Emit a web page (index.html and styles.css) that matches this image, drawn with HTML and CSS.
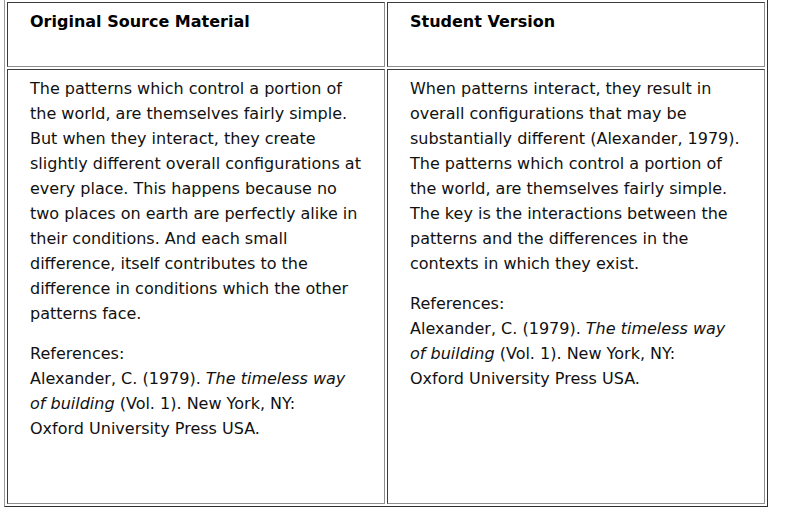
FILE: index.html
```html
<!DOCTYPE html>
<html>
<head>
<meta charset="utf-8">
<link rel="stylesheet" href="styles.css">
</head>
<body>
<table class="compare">
  <tr class="head-row">
    <td class="cell"><strong>Original Source Material</strong></td>
    <td class="cell"><strong>Student Version</strong></td>
  </tr>
  <tr class="body-row">
    <td class="cell">
      <p class="para">The patterns which control a portion of the world, are themselves fairly simple. But when they interact, they create slightly different overall configurations at every place. This happens because no two places on earth are perfectly alike in their conditions. And each small difference, itself contributes to the difference in conditions which the other patterns face.</p>
      <p class="para">References:<br>Alexander, C. (1979). <em>The timeless way of building</em> (Vol. 1). New York, NY: Oxford&nbsp;University Press USA.</p>
    </td>
    <td class="cell">
      <p class="para">When patterns interact, they result in overall configurations that may be substantially different (Alexander, 1979). The patterns which control a portion of the world, are themselves fairly simple. The key is the interactions between the patterns and the differences in the contexts in which they exist.</p>
      <p class="para">References:<br>Alexander, C. (1979). <em>The timeless way of building</em> (Vol. 1). New York, NY: Oxford&nbsp;University Press USA.</p>
    </td>
  </tr>
</table>
</body>
</html>
```
FILE: styles.css
```css
html, body {
  margin: 0;
  padding: 0;
  background: #fff;
}
body {
  font-family: "DejaVu Sans", Verdana, sans-serif;
  font-size: 16px;
  line-height: 25px;
  color: #111;
}
.compare {
  margin: -1px 0 0 4px;
  width: 764px;
  border-collapse: separate;
  border-spacing: 2px;
  border: 1px solid;
  border-color: #9a9a9a #2e2e2e #2e2e2e #9a9a9a;
  table-layout: fixed;
}
.cell {
  box-sizing: border-box;
  width: 378px;
  vertical-align: top;
  padding: 6px 20px 6px 22px;
  border: 1px solid;
  border-color: #3c3c3c #8e8e8e #8e8e8e #3c3c3c;
}
.head-row .cell {
  height: 65px;
}
.head-row strong {
  color: #000;
}
.body-row .cell {
  height: 435px;
}
.para {
  margin: 0 0 15px 0;
}
.para:last-child {
  margin-bottom: 0;
}
```
